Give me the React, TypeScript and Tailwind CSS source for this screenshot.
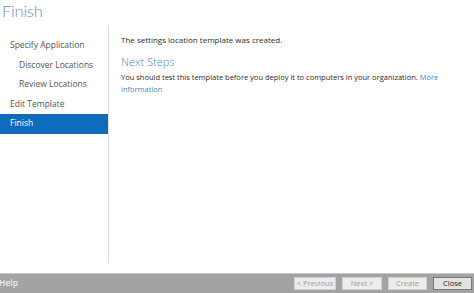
export default function App() {
  const steps = [
    { label: 'Specify Application', indent: false },
    { label: 'Discover Locations', indent: true },
    { label: 'Review Locations', indent: true },
    { label: 'Edit Template', indent: false },
    { label: 'Finish', indent: false, active: true },
  ];

  return (
    <div className="w-[474px] h-[293px] bg-white flex flex-col overflow-hidden font-['Open_Sans',sans-serif]">
      <h1 className="h-[26px] pl-[2px] pt-[1px] text-[16.5px] leading-[20px] font-light tracking-[-0.2px] font-['Lato',sans-serif] text-[#6a92b8]">Finish</h1>

      <div className="flex flex-1 pb-[10px]">
        <nav className="w-[109px] border-r border-[#dcdcdc] pt-[10px] flex flex-col">
          {steps.map((s) => (
            <div
              key={s.label}
              className={
                'h-[19.5px] flex items-center text-[8.5px] ' +
                (s.indent ? 'pl-[19px] ' : 'pl-[10px] ') +
                (s.active ? 'bg-[#0f6cbd] text-white' : 'text-[#555]')
              }
            >
              {s.label}
            </div>
          ))}
        </nav>

        <main className="flex-1 pl-[12px] pt-[8px] pr-[10px]">
          <p className="text-[8px] leading-[12px] text-[#2a2a2a]">The settings location template was created.</p>
          <h2 className="mt-[9px] text-[11px] leading-[14px] font-light text-[#4f88b8]">Next Steps</h2>
          <p className="mt-[2px] text-[7.5px] leading-[12px] text-[#2a2a2a]">
            You should test this template before you deploy it to computers in your organization.{' '}
            <span className="text-[#4f88b8]">More</span> <span className="text-[#4f88b8]">information</span>
          </p>
        </main>
      </div>

      <footer className="h-[20px] bg-[#a3a3a3] border-t border-[#c8c8c8] flex items-center pr-[2px]">
        <span className="text-[8.5px] font-semibold text-[#eee] -ml-[1px]">Help</span>
        <div className="ml-auto flex gap-[6px] items-center">
          <button className="w-[42px] h-[13px] bg-[#ececec] border border-[#d0d0d0] text-[7.5px] leading-none text-[#a0a0a0]">&lt; Previous</button>
          <button className="w-[40px] h-[13px] bg-[#ececec] border border-[#d0d0d0] text-[7.5px] leading-none text-[#a0a0a0]">Next &gt;</button>
          <button className="w-[39px] h-[13px] bg-[#ececec] border border-[#d0d0d0] text-[7.5px] leading-none text-[#a0a0a0]">Create</button>
          <button className="w-[39px] h-[13px] bg-[#e2e2e2] border border-[#7a7a7a] text-[7.5px] leading-none text-[#222]">Close</button>
        </div>
      </footer>
    </div>
  );
}
